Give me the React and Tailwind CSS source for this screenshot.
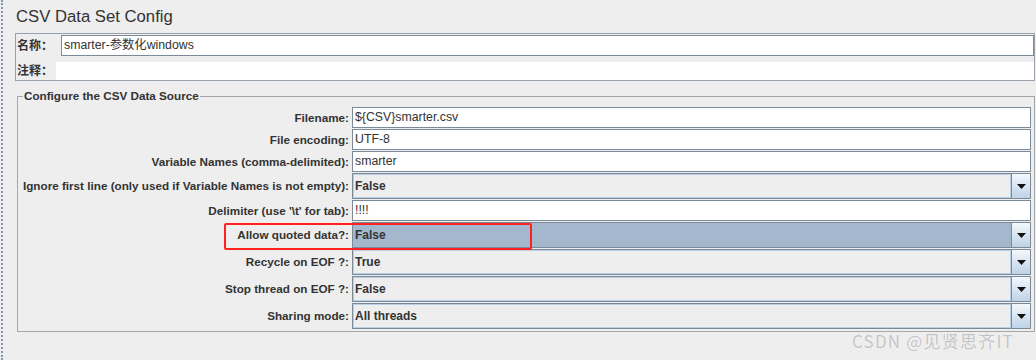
import React from "react";

const textRows = {
  filename: { label: "Filename:", value: "${CSV}smarter.csv" },
  encoding: { label: "File encoding:", value: "UTF-8" },
  names: { label: "Variable Names (comma-delimited):", value: "smarter" },
  delimiter: { label: "Delimiter (use '\\t' for tab):", value: "!!!!" },
};

function Arrow() {
  return (
    <svg width="9" height="5" viewBox="0 0 9 5" className="block">
      <path d="M0 0 H9 L4.5 5 Z" fill="#111111" />
    </svg>
  );
}

function FieldRow({ label, value }) {
  return (
    <div className="flex items-center h-[21px]">
      <div className="w-[334px] pr-[3px] text-right font-bold text-[11.7px] text-[#333333] whitespace-nowrap">{label}</div>
      <div className="flex-1 h-[21px] bg-white border border-[#7a8a99] flex items-center pl-[2px] text-[12.3px] text-[#333333]">
        {value}
      </div>
    </div>
  );
}

function ComboRow({ label, value, selected }) {
  return (
    <div className="flex items-center h-[26px]">
      <div className="w-[334px] pr-[3px] text-right font-bold text-[11.7px] text-[#333333] whitespace-nowrap">{label}</div>
      <div className="flex-1 h-[26px] flex border border-[#7a8a99]">
        <div
          className={`flex-1 flex items-center pl-px font-bold text-[12px] text-[#333333] border ${
            selected ? "bg-[#a3b8cc] border-[#a3b8cc]" : "bg-[#eeeeee] border-[#b8cfe5]"
          }`}
        >
          {value}
        </div>
        <div className="w-[19px] border-l border-[#7a8a99] bg-gradient-to-b from-[#f4f8fc] to-[#bfd2e6] flex items-center justify-center">
          <Arrow />
        </div>
      </div>
    </div>
  );
}

export default function App() {
  return (
    <div className="w-[1036px] h-[360px] bg-[#eeeeee] flex overflow-hidden relative font-['Liberation_Sans','Noto_Sans_CJK_SC',sans-serif]">
      {/* left splitter edge */}
      <div className="w-[3px] h-full">
        <div className="ml-px w-[2px] h-full border-l-2 border-dotted border-[#8394b4]" />
      </div>

      <div className="flex-1 flex flex-col">
        <div className="pt-[7px] pl-[13px] text-[16.7px] leading-[19px] text-[#333333] mb-[7px]">CSV Data Set Config</div>

        {/* name / comment */}
        <div className="ml-[12px] mr-px h-[48px] border border-[#98a2ac] pt-px flex flex-col">
          <div className="flex items-center h-[21px]">
            <div className="w-[45px] pl-px font-bold text-[12px] text-[#333333]">名称：</div>
            <div className="flex-1 h-[21px] bg-white border border-[#7a8a99] flex items-center pl-[2px] text-[12.3px] text-[#333333]">
              smarter-参数化windows
            </div>
          </div>
          <div className="flex items-center h-[18px] mt-[6px]">
            <div className="w-[40px] pl-px font-bold text-[12px] text-[#333333]">注释：</div>
            <div className="flex-1 h-[18px] bg-white" />
          </div>
        </div>

        {/* csv data source group */}
        <fieldset className="ml-[14px] mr-px mt-[8px] border border-[#a6a6a6] pt-[4px] pr-[3px] pb-[2px]">
          <legend className="ml-[5px] px-px font-bold text-[11.7px] leading-[14px] text-[#333333]">
            Configure the CSV Data Source
          </legend>
          <div className="flex flex-col gap-px">
            <FieldRow {...textRows.filename} />
            <FieldRow {...textRows.encoding} />
            <FieldRow {...textRows.names} />
            <ComboRow label="Ignore first line (only used if Variable Names is not empty):" value="False" />
            <FieldRow {...textRows.delimiter} />
            <ComboRow label="Allow quoted data?:" value="False" selected />
            <ComboRow label="Recycle on EOF ?:" value="True" />
            <ComboRow label="Stop thread on EOF ?:" value="False" />
            <ComboRow label="Sharing mode:" value="All threads" />
          </div>
        </fieldset>
      </div>

      {/* screenshot annotation */}
      <div className="absolute left-[224px] top-[223px] w-[308px] h-[27px] border-2 border-[#ff2020] rounded-[2px]" />

      {/* watermark */}
      <div className="absolute left-[852px] top-[330px] text-[17px] leading-[22px] tracking-[1.2px] text-[#c4c4c4] font-['Noto_Sans_CJK_SC',sans-serif] [text-shadow:0_0_1px_#ffffff]">
        CSDN @见贤思齐IT
      </div>
    </div>
  );
}
